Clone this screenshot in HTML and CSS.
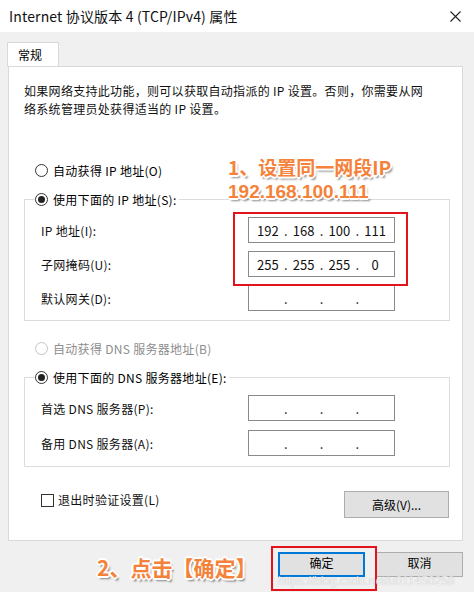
FILE: index.html
```html
<!DOCTYPE html>
<html lang="zh-CN">
<head>
    <meta charset="UTF-8">
    <meta name="viewport" content="width=device-width, initial-scale=1.0">
    <title>Internet 协议版本 4 (TCP/IPv4) 属性</title>
    <link rel="stylesheet" href="styles.css">
</head>
<body>
    <div class="window">
        <header class="titlebar">
            <span class="title">Internet 协议版本 4 (TCP/IPv4) 属性</span>
            <svg class="close" width="11" height="11" viewBox="0 0 11 11">
                <path d="M0.5 0.5 L10.5 10.5 M10.5 0.5 L0.5 10.5" stroke="#222" stroke-width="1.1" fill="none"/>
            </svg>
        </header>

        <div class="dialog">
            <div class="tabs">
                <div class="tab">常规</div>
            </div>

            <div class="panel">
                <p class="desc">如果网络支持此功能，则可以获取自动指派的 IP 设置。否则，你需要从网<br>络系统管理员处获得适当的 IP 设置。</p>

                <label class="radio-row first">
                    <span class="radio"></span>自动获得 IP 地址(O)
                </label>

                <fieldset class="group">
                    <legend><span class="radio checked"></span>使用下面的 IP 地址(S):</legend>
                    <div class="field">
                        <span>IP 地址(I):</span>
                        <div class="ip">
                            <span>192</span><i>.</i><span>168</span><i>.</i><span>100</span><i>.</i><span>111</span>
                        </div>
                    </div>
                    <div class="field">
                        <span>子网掩码(U):</span>
                        <div class="ip">
                            <span>255</span><i>.</i><span>255</span><i>.</i><span>255</span><i>.</i><span>0</span>
                        </div>
                    </div>
                    <div class="field">
                        <span>默认网关(D):</span>
                        <div class="ip">
                            <span></span><i>.</i><span></span><i>.</i><span></span><i>.</i><span></span>
                        </div>
                    </div>
                </fieldset>

                <label class="radio-row disabled">
                    <span class="radio"></span>自动获得 DNS 服务器地址(B)
                </label>

                <fieldset class="group dns">
                    <legend><span class="radio checked"></span>使用下面的 DNS 服务器地址(E):</legend>
                    <div class="field">
                        <span>首选 DNS 服务器(P):</span>
                        <div class="ip">
                            <span></span><i>.</i><span></span><i>.</i><span></span><i>.</i><span></span>
                        </div>
                    </div>
                    <div class="field">
                        <span>备用 DNS 服务器(A):</span>
                        <div class="ip">
                            <span></span><i>.</i><span></span><i>.</i><span></span><i>.</i><span></span>
                        </div>
                    </div>
                </fieldset>

                <div class="options">
                    <label class="check-row"><span class="checkbox"></span>退出时验证设置(L)</label>
                    <button class="btn advanced">高级(V)...</button>
                </div>
            </div>

            <div class="actions">
                <button class="btn default">确定</button>
                <button class="btn">取消</button>
            </div>
        </div>

        <!-- screenshot annotations -->
        <div class="note note-ip">
            <div class="note-line">1、设置同一网段IP</div>
            <div class="note-num">192.168.100.111</div>
        </div>
        <div class="mark mark-ip"></div>
        <div class="note note-ok">2、点击【确定】</div>
        <div class="mark mark-ok"></div>
        <div class="watermark">https://blog.csdn.net/u011450258</div>
    </div>
</body>
</html>
```

FILE: styles.css
```css
body {
    margin: 0;
    font-family: "Noto Sans CJK SC", "Noto Sans", sans-serif;
    font-size: 12px;
    color: #000;
    background-color: #f0f0f0;
}

.window {
    position: relative;
    width: 474px;
    height: 592px;
    overflow: hidden;
    background-color: #f0f0f0;
}

.titlebar {
    height: 32px;
    background-color: #fff;
    display: flex;
    align-items: center;
    justify-content: space-between;
    padding: 0 13px 0 9px;
    box-sizing: border-box;
}

.title {
    font-size: 14px;
    color: #111;
    letter-spacing: 0.15px;
}

.dialog {
    padding: 10px 11px 0 8px;
}

.tabs {
    display: flex;
}

.tab {
    margin-left: -1px;
    width: 52px;
    height: 24px;
    line-height: 24px;
    padding-left: 10px;
    box-sizing: border-box;
    background-color: #fff;
    border: 1px solid #d9d9d9;
    border-bottom: none;
    font-size: 12px;
}

.panel {
    height: 475px;
    box-sizing: border-box;
    background-color: #fff;
    border: 1px solid #d9d9d9;
    padding: 15px 12px 0 15px;
    letter-spacing: 0.3px;
}

.desc {
    margin: 0;
    line-height: 18px;
    color: #111;
}

.radio-row {
    display: flex;
    align-items: center;
    height: 20px;
    margin-left: 11px;
}

.radio-row.first {
    margin-top: 42px;
}

.radio-row.disabled {
    margin-top: 17px;
    color: #8d8d8d;
}

.radio {
    width: 13px;
    height: 13px;
    box-sizing: border-box;
    border: 1px solid #333;
    border-radius: 50%;
    margin-right: 5px;
    display: inline-flex;
    align-items: center;
    justify-content: center;
    background-color: #fff;
}

.radio.checked::after {
    content: "";
    width: 7px;
    height: 7px;
    border-radius: 50%;
    background-color: #222;
}

.disabled .radio {
    border-color: #c4c4c4;
}

.group {
    margin: 9px 0 0 0;
    padding: 8px 54px 9px 16px;
    border: 1px solid #dcdcdc;
    min-width: 0;
    display: flex;
    flex-direction: column;
    gap: 8px;
}

.group legend {
    display: flex;
    align-items: center;
    height: 20px;
    padding: 0 2px 0 0;
    margin-left: -6px;
}

.group.dns {
    margin-top: 9px;
    padding-bottom: 10px;
    gap: 9px;
}

.field {
    display: flex;
    align-items: center;
    justify-content: space-between;
    color: #111;
}

.ip {
    width: 147px;
    height: 26px;
    box-sizing: border-box;
    border: 1px solid #8a8a8a;
    padding: 0 3px;
    display: flex;
    align-items: center;
    font-size: 13px;
    color: #111;
    letter-spacing: 0;
}

.ip span {
    flex: 1;
    text-align: center;
}

.ip i {
    font-style: normal;
    width: 4px;
    text-align: center;
}

.options {
    display: flex;
    justify-content: space-between;
    align-items: flex-start;
    margin-top: 24px;
    padding-left: 17px;
}

.check-row {
    display: flex;
    align-items: center;
    line-height: 18px;
    color: #111;
}

.checkbox {
    width: 13px;
    height: 13px;
    box-sizing: border-box;
    border: 1px solid #333;
    margin-right: 4px;
    background-color: #fff;
}

.btn {
    font-family: inherit;
    font-size: 12px;
    color: #000;
    background-color: #e1e1e1;
    border: 1px solid #adadad;
    padding: 0;
    margin: 0;
}

.advanced {
    width: 105px;
    height: 27px;
    margin-right: 1px;
}

.actions {
    display: flex;
    justify-content: flex-end;
    gap: 11px;
    margin-top: 11px;
}

.actions .btn {
    width: 87px;
    height: 25px;
    line-height: 18px;
    padding-bottom: 4px;
}

.btn.default {
    border-color: #0078d7;
    box-shadow: inset 0 0 0 1px #0078d7;
}

/* annotations drawn over the dialog */
.note {
    position: absolute;
    font-weight: bold;
    color: #f5823a;
    font-size: 19px;
    line-height: 23px;
    text-shadow:
        -1px -1px 0 #fff, 1px -1px 0 #fff, -1px 1px 0 #fff, 1px 1px 0 #fff,
        0 -2px 0 #fff, 0 2px 0 #fff, -2px 0 0 #fff, 2px 0 0 #fff,
        2px 3px 2px rgba(0, 0, 0, 0.45);
}

.note-ip {
    left: 228px;
    top: 153px;
}

.note-line {
    line-height: 28px;
}

.note-num {
    font-family: "Liberation Sans", sans-serif;
    line-height: 21px;
}

.note-ok {
    left: 97px;
    top: 555px;
    font-size: 21px;
    line-height: 24px;
}

.mark {
    position: absolute;
    border: 2px solid #e3121b;
    box-sizing: border-box;
}

.mark-ip {
    left: 233px;
    top: 212px;
    width: 175px;
    height: 74px;
}

.mark-ok {
    left: 271px;
    top: 546px;
    width: 106px;
    height: 45px;
}

.watermark {
    position: absolute;
    left: 278px;
    top: 574px;
    font-family: "Liberation Sans", sans-serif;
    font-size: 12px;
    line-height: 14px;
    color: rgba(255, 255, 255, 0.75);
    text-shadow: 0 0 1px rgba(0, 0, 0, 0.25);
}
```
